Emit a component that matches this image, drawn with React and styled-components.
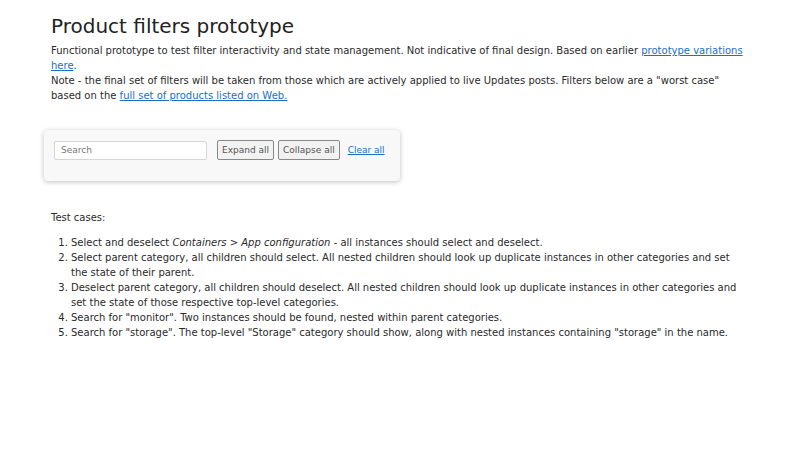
import styled, { createGlobalStyle } from "styled-components";

const GlobalStyle = createGlobalStyle`
  html, body {
    margin: 0;
    padding: 0;
    background: #ffffff;
  }
  body {
    font-family: "DejaVu Sans", sans-serif;
    font-size: 10px;
    line-height: 15px;
    color: #2a2a2a;
  }
`;

const Page = styled.main`
  padding: 12px 51px 40px 51px;
  max-width: 700px;
`;

const Title = styled.h1`
  font-size: 20px;
  font-weight: normal;
  line-height: 28px;
  margin: 0 0 3px 0;
  color: #222222;
`;

const Intro = styled.p`
  margin: 0;
`;

const Link = styled.a`
  color: #1a6fc9;
  text-decoration: underline;
`;

const FilterPanel = styled.section`
  margin: 27px 0 0 -7px;
  width: 356px;
  height: 51px;
  box-sizing: border-box;
  background: #f8f8f8;
  border-radius: 4px;
  box-shadow: 0 1px 5px rgba(0, 0, 0, 0.25);
  padding: 10px;
`;

const Toolbar = styled.div`
  display: flex;
  align-items: center;
  gap: 4px;
`;

const SearchInput = styled.input`
  font-family: "DejaVu Sans", sans-serif;
  font-size: 9px;
  width: 153px;
  height: 19px;
  box-sizing: border-box;
  border: 1px solid #d6d6d6;
  border-radius: 2px;
  padding: 0 6px;
  margin-right: 6px;
  background: #ffffff;
  color: #333;
  &::placeholder {
    color: #777;
  }
`;

const Button = styled.button`
  font-family: "DejaVu Sans", sans-serif;
  font-size: 9px;
  white-space: nowrap;
  height: 20px;
  padding: 0 4px;
  border: 1px solid #888;
  border-radius: 2px;
  background: #f2f2f2;
  color: #555;
`;

const TextLink = styled(Link)`
  font-size: 9px;
  white-space: nowrap;
  margin-left: 4px;
`;

const Cases = styled.p`
  margin: 29px 0 0 0;
`;

const CaseList = styled.ol`
  margin: 10px 0 0 0;
  padding-left: 20px;
`;

export default function App() {
  return (
    <>
      <GlobalStyle />
      <Page>
        <Title>Product filters prototype</Title>
        <Intro>
          Functional prototype to test filter interactivity and state
          management. Not indicative of final design. Based on earlier{" "}
          <Link href="#">prototype variations here</Link>.
          <br />
          Note - the final set of filters will be taken from those which are
          actively applied to live Updates posts. Filters below are a "worst
          case" based on the{" "}
          <Link href="#">full set of products listed on Web.</Link>
        </Intro>
        <FilterPanel>
          <Toolbar>
            <SearchInput placeholder="Search" />
            <Button>Expand all</Button>
            <Button>Collapse all</Button>
            <TextLink href="#">Clear all</TextLink>
          </Toolbar>
        </FilterPanel>
        <Cases>Test cases:</Cases>
        <CaseList>
          <li>
            Select and deselect <em>Containers &gt; App configuration</em> -
            all instances should select and deselect.
          </li>
          <li>
            Select parent category, all children should select. All nested
            children should look up duplicate instances in other categories
            and set the state of their parent.
          </li>
          <li>
            Deselect parent category, all children should deselect. All nested
            children should look up duplicate instances in other categories
            and set the state of those respective top-level categories.
          </li>
          <li>
            Search for "monitor". Two instances should be found, nested within
            parent categories.
          </li>
          <li>
            Search for "storage". The top-level "Storage" category should show,
            along with nested instances containing "storage" in the name.
          </li>
        </CaseList>
      </Page>
    </>
  );
}
